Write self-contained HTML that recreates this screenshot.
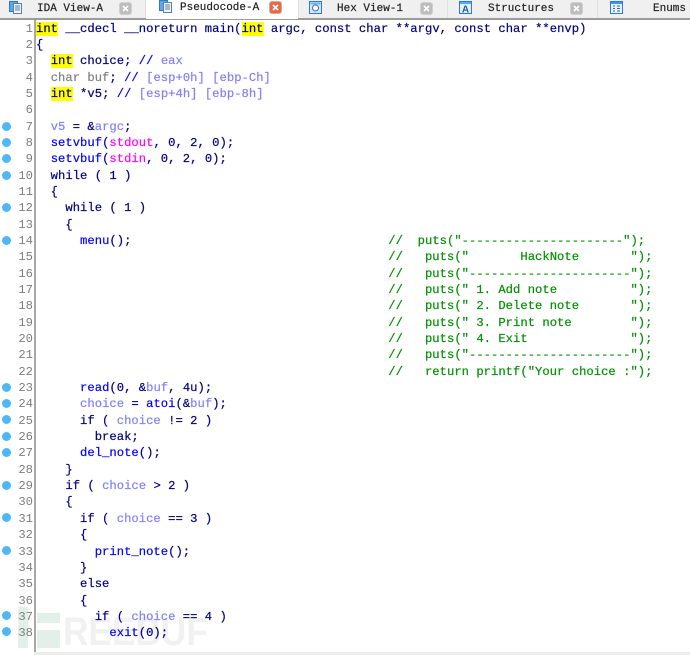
<!DOCTYPE html>
<html><head><meta charset="utf-8"><style>
html,body{margin:0;padding:0;background:#fff}
#p{position:relative;width:690px;height:655px;overflow:hidden;background:#fff}
#tabs{position:absolute;left:0;top:0;width:690px;height:18px;background:#f0f0f0;border-bottom:2px solid #9b9b9b}
.t{position:absolute;top:1px;font:11px/17px "Liberation Mono","DejaVu Sans Mono",monospace;color:#222;white-space:pre;-webkit-text-stroke:.2px #222}
.sep{position:absolute;top:0;width:1px;height:18px;background:#e2e2e2}
.x{position:absolute;top:3px;width:11px;height:11px;background:#bdbdbd;border-radius:2px;box-shadow:0 0 0 1px #cfcfcf}
.x svg{position:absolute;left:2px;top:2px}
.ic{position:absolute}
#gut{position:absolute;left:34px;top:20px;width:2px;height:632px;background:#a8a8a8}
#nums{position:absolute;left:0;top:20.5px;width:33px;text-align:right;font:12.2px/16.35px "Liberation Mono",monospace;color:#7d7d7d;white-space:pre}
#code{position:absolute;left:36px;top:20.5px;margin:0;font:12.2px/16.35px "Liberation Mono",monospace;letter-spacing:.025px;color:#000080;white-space:pre;-webkit-text-stroke:.2px currentColor}
.k{background:#ffff00}.v{color:#8080ff}.f{color:#0000ff}.s{color:#ff00ff}.g{color:#808080}.c{color:#009000}.b{color:#0000ff}
.d{position:absolute;left:2px;width:9px;height:9px;border-radius:50%;background:#4db8f5}
#bot{position:absolute;left:34px;top:652px;width:656px;height:3px;background:#ececec}
.wm{position:absolute;background:#e3efe9}
#wt{position:absolute;left:63px;top:609px;font:bold 40px/46px "Liberation Sans",sans-serif;color:#f1f1f1;white-space:pre;transform:scaleX(.88);transform-origin:0 0}
</style></head><body><div id="p">
<div id="tabs"></div>
<div style="position:absolute;left:146px;top:0;width:152px;height:19px;background:#fff"></div>
<div class="sep" style="left:145px"></div><div class="sep" style="left:298px"></div><div class="sep" style="left:447px"></div><div class="sep" style="left:597px"></div>

<svg class="ic" style="left:9px;top:1px" width="14" height="13" viewBox="0 0 14 13"><rect x=".5" y=".5" width="8" height="10" fill="#5aa8e8" stroke="#2f78c8"/><rect x="4.5" y="2.5" width="8" height="10" fill="#eef4fa" stroke="#5a7fa8"/><path d="M6 5h5M6 7h5M6 9h5" stroke="#5a7fa8"/></svg>
<div class="t" style="left:37px">IDA View-A</div>
<div class="x" style="left:120px"><svg width="7" height="7"><path d="M1 1l5 5M6 1l-5 5" stroke="#fff" stroke-width="1.6"/></svg></div>

<svg class="ic" style="left:159px;top:0" width="14" height="13" viewBox="0 0 14 13"><rect x=".5" y=".5" width="8" height="10" fill="#5aa8e8" stroke="#2f78c8"/><rect x="4.5" y="2.5" width="8" height="10" fill="#eef4fa" stroke="#5a7fa8"/><path d="M6 5h5M6 7h5M6 9h5" stroke="#5a7fa8"/></svg>
<div class="t" style="left:180px;top:0">Pseudocode-A</div>
<div class="x" style="left:270px;top:2px;background:#e4694a;box-shadow:0 0 0 1px #eda48f"><svg width="7" height="7"><path d="M1 1l5 5M6 1l-5 5" stroke="#fff" stroke-width="1.6"/></svg></div>

<svg class="ic" style="left:309px;top:1px" width="13" height="13" viewBox="0 0 13 13"><rect x=".5" y=".5" width="12" height="12" fill="#d4e6fb" stroke="#2f78e0"/><rect x="1.5" y="1.5" width="10" height="2" fill="#6fb0f0"/><circle cx="6.5" cy="7" r="3" fill="#fff" stroke="#3a6fd0"/></svg>
<div class="t" style="left:337px">Hex View-1</div>
<div class="x" style="left:421px"><svg width="7" height="7"><path d="M1 1l5 5M6 1l-5 5" stroke="#fff" stroke-width="1.6"/></svg></div>

<svg class="ic" style="left:459px;top:1px" width="13" height="13" viewBox="0 0 13 13"><rect x=".5" y=".5" width="12" height="12" fill="#e4effb" stroke="#2f78e0"/><rect x="1" y="1" width="11" height="2" fill="#5aa8f0"/><text x="6.5" y="11.5" font-family="Liberation Sans" font-weight="bold" font-size="10" fill="#1f5fa8" text-anchor="middle">A</text></svg>
<div class="t" style="left:488px">Structures</div>
<div class="x" style="left:571px"><svg width="7" height="7"><path d="M1 1l5 5M6 1l-5 5" stroke="#fff" stroke-width="1.6"/></svg></div>

<svg class="ic" style="left:610px;top:1px" width="13" height="13" viewBox="0 0 13 13"><rect x=".5" y=".5" width="12" height="12" fill="#e8f2fc" stroke="#2f78e0"/><rect x="1" y="1" width="11" height="2" fill="#3f98f0"/><path d="M3 5h2M7 5h3M3 7.5h2M7 7.5h3M3 10h2M7 10h3" stroke="#1f6fd0"/></svg>
<div class="t" style="left:653px">Enums</div>

<div class="wm" style="left:18px;top:607px;width:10px;height:41px"></div>
<div class="wm" style="left:37px;top:613px;width:23px;height:10px"></div>
<div class="wm" style="left:37px;top:630px;width:23px;height:18px"></div>
<div id="wt">REEBUF</div>

<div id="gut"></div>
<div id="nums">1
2
3
4
5
6
7
8
9
10
11
12
13
14
15
16
17
18
19
20
21
22
23
24
25
26
27
28
29
30
31
32
33
34
35
36
37
38</div>
<div class="d" style="top:122px"></div><div class="d" style="top:138px"></div><div class="d" style="top:154px"></div><div class="d" style="top:171px"></div><div class="d" style="top:203px"></div><div class="d" style="top:236px"></div>
<div class="d" style="top:383px"></div><div class="d" style="top:399px"></div><div class="d" style="top:415px"></div><div class="d" style="top:432px"></div><div class="d" style="top:448px"></div><div class="d" style="top:481px"></div><div class="d" style="top:513px"></div><div class="d" style="top:546px"></div><div class="d" style="top:611px"></div><div class="d" style="top:627px"></div>
<pre id="code"><span class="k">int</span> __cdecl __noreturn main(<span class="k">int</span> argc, const char **argv, const char **envp)
{
  <span class="k">int</span> choice; <span class="b">//</span> <span class="v">eax</span>
  <span class="g">char buf</span>; <span class="b">//</span> <span class="v">[esp+0h] [ebp-Ch]</span>
  <span class="k">int</span> *v5; <span class="b">//</span> <span class="v">[esp+4h] [ebp-8h]</span>

  <span class="v">v5</span> = &amp;<span class="v">argc</span>;
  <span class="f">setvbuf</span>(<span class="s">stdout</span>, 0, 2, 0);
  <span class="f">setvbuf</span>(<span class="s">stdin</span>, 0, 2, 0);
  while ( 1 )
  {
    while ( 1 )
    {
      <span class="f">menu</span>();                                   <span class="c">//  puts("----------------------");</span>
                                                <span class="c">//   puts("       HackNote       ");</span>
                                                <span class="c">//   puts("----------------------");</span>
                                                <span class="c">//   puts(" 1. Add note          ");</span>
                                                <span class="c">//   puts(" 2. Delete note       ");</span>
                                                <span class="c">//   puts(" 3. Print note        ");</span>
                                                <span class="c">//   puts(" 4. Exit              ");</span>
                                                <span class="c">//   puts("----------------------");</span>
                                                <span class="c">//   return printf("Your choice :");</span>
      <span class="f">read</span>(0, &amp;<span class="v">buf</span>, 4u);
      <span class="v">choice</span> = <span class="f">atoi</span>(&amp;<span class="v">buf</span>);
      if ( <span class="v">choice</span> != 2 )
        break;
      <span class="f">del_note</span>();
    }
    if ( <span class="v">choice</span> &gt; 2 )
    {
      if ( <span class="v">choice</span> == 3 )
      {
        <span class="f">print_note</span>();
      }
      else
      {
        if ( <span class="v">choice</span> == 4 )
          <span class="f">exit</span>(0);</pre>
<div id="bot"></div>
</div></body></html>
